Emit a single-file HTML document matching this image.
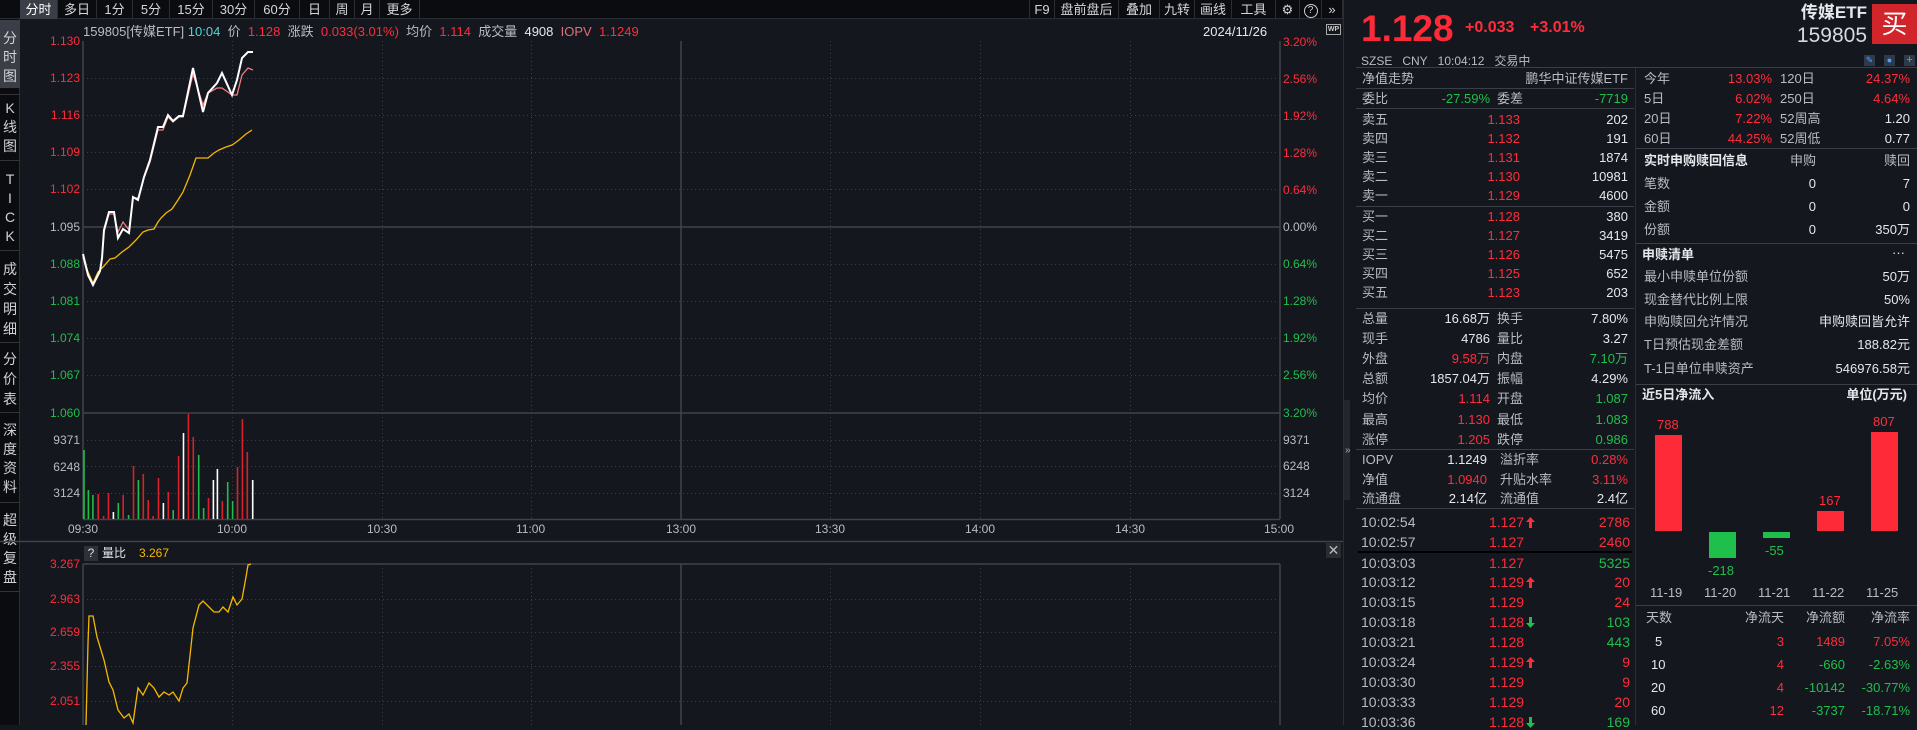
<!DOCTYPE html>
<html><head><meta charset="utf-8">
<style>
*{margin:0;padding:0;box-sizing:border-box}
body{width:1917px;height:725px;background:#14171d;overflow:hidden;position:relative;font-family:"Liberation Sans","Noto Sans CJK SC",sans-serif;color:#c9ccd2}
.t{position:absolute;white-space:nowrap;line-height:1}
.r{color:#ff2d3c}.g{color:#1fbf4c}.w{color:#e6e8ec}.y{color:#f5b800}.c{color:#4fd6d6}.gy{color:#b8bcc4}
.f12{font-size:12px}.f13{font-size:13px}.f14{font-size:14px}
.tab{position:absolute;top:0;height:19px;font-size:13px;line-height:19px;text-align:center;color:#d4d6da;border-right:1px solid #2a2d33}
.sb{position:absolute;left:0;width:20px;font-size:14px;text-align:center;color:#d0d2d6}
.hl{position:absolute;height:1px;background:#2c3038}
.vl{position:absolute;width:1px;background:#2c3038}
b{font-weight:bold}
.au,.ad{display:inline-block;width:9px;height:11px;margin-left:2px;vertical-align:-1px}
</style></head><body>
<svg width="0" height="0" style="position:absolute"><defs>
<symbol id="up" viewBox="0 0 9 11"><path d="M4.5 0 L9 5 L6 5 L6 11 L3 11 L3 5 L0 5 Z" fill="#ff2d3c"/></symbol>
<symbol id="dn" viewBox="0 0 9 11"><path d="M4.5 11 L9 6 L6 6 L6 0 L3 0 L3 6 L0 6 Z" fill="#1fbf4c"/></symbol>
</defs></svg>
<div style="position:absolute;left:0;top:0;width:1343px;height:19px;background:#0b0c0f;border-bottom:1px solid #2a2d33"></div>
<div class="tab" style="left:20px;width:38px;background:#3b3e46;color:#fff">分时</div>
<div class="tab" style="left:58px;width:39px">多日</div>
<div class="tab" style="left:97px;width:36px">1分</div>
<div class="tab" style="left:133px;width:37px">5分</div>
<div class="tab" style="left:170px;width:43px">15分</div>
<div class="tab" style="left:213px;width:42px">30分</div>
<div class="tab" style="left:255px;width:45px">60分</div>
<div class="tab" style="left:300px;width:30px">日</div>
<div class="tab" style="left:330px;width:25px">周</div>
<div class="tab" style="left:355px;width:25px">月</div>
<div class="tab" style="left:380px;width:40px">更多</div>
<div class="tab" style="left:1029px;width:26px;border-left:1px solid #2a2d33">F9</div>
<div class="tab" style="left:1055px;width:64px">盘前盘后</div>
<div class="tab" style="left:1119px;width:41px">叠加</div>
<div class="tab" style="left:1160px;width:35px">九转</div>
<div class="tab" style="left:1195px;width:37px">画线</div>
<div class="tab" style="left:1232px;width:44px">工具</div>
<div class="tab" style="left:1276px;width:24px">⚙</div>
<div class="tab" style="left:1300px;width:22px"><span style="display:inline-block;width:14px;height:14px;border:1px solid #ccc;border-radius:50%;font-size:10px;line-height:12px;vertical-align:middle">?</span></div>
<div class="tab" style="left:1322px;width:21px">»</div>
<div style="position:absolute;left:0;top:19px;width:20px;height:706px;background:#0b0c0f;border-right:1px solid #2a2d33"></div>
<div style="position:absolute;left:0;top:20px;width:20px;height:68px;background:#3b3e46"></div>
<div class="sb" style="top:29px;line-height:19px">分<br>时<br>图</div>
<div class="sb" style="top:99px;line-height:19px">K<br>线<br>图</div>
<div class="sb" style="top:170px;line-height:19px">T<br>I<br>C<br>K</div>
<div class="sb" style="top:259px;line-height:20px">成<br>交<br>明<br>细</div>
<div class="sb" style="top:349px;line-height:20px">分<br>价<br>表</div>
<div class="sb" style="top:421px;line-height:19px">深<br>度<br>资<br>料</div>
<div class="sb" style="top:511px;line-height:19px">超<br>级<br>复<br>盘</div>
<div class="hl" style="left:0;width:20px;top:94px;background:#333"></div>
<div class="hl" style="left:0;width:20px;top:160px;background:#333"></div>
<div class="hl" style="left:0;width:20px;top:250px;background:#333"></div>
<div class="hl" style="left:0;width:20px;top:342px;background:#333"></div>
<div class="hl" style="left:0;width:20px;top:412px;background:#333"></div>
<div class="hl" style="left:0;width:20px;top:502px;background:#333"></div>
<div class="hl" style="left:0;width:20px;top:591px;background:#333"></div>
<div class="t f13" style="left:83px;top:25px"><span class="gy">159805[传媒ETF]</span> <span class="c">10:04</span>&nbsp; <span class="gy">价</span>&nbsp; <span class="r">1.128</span>&nbsp; <span class="gy">涨跌</span>&nbsp; <span class="r">0.033(3.01%)</span>&nbsp; <span class="gy">均价</span>&nbsp; <span class="r">1.114</span>&nbsp; <span class="gy">成交量</span>&nbsp; <span class="w">4908</span>&nbsp; <span style="color:#e0707a">IOPV</span>&nbsp; <span class="r">1.1249</span></div>
<div class="t f13 w" style="left:1203px;top:25px">2024/11/26</div>
<div style="position:absolute;left:1326px;top:24px;width:15px;height:11px;border:1px solid #aaa;font-size:7px;color:#ccc;text-align:center;line-height:9px;font-weight:bold">WP</div>
<svg style="position:absolute;left:0;top:0" width="1343" height="725">
<g stroke="#3a3e46" stroke-dasharray="1,3" stroke-width="1">
<line x1="83" x2="1280" y1="78.5" y2="78.5"/><line x1="83" x2="1280" y1="115.5" y2="115.5"/><line x1="83" x2="1280" y1="152.5" y2="152.5"/><line x1="83" x2="1280" y1="189.5" y2="189.5"/>
<line x1="83" x2="1280" y1="264.5" y2="264.5"/><line x1="83" x2="1280" y1="301.5" y2="301.5"/><line x1="83" x2="1280" y1="338.5" y2="338.5"/><line x1="83" x2="1280" y1="375.5" y2="375.5"/>
<line x1="83" x2="1280" y1="440.5" y2="440.5"/><line x1="83" x2="1280" y1="466.5" y2="466.5"/><line x1="83" x2="1280" y1="493.5" y2="493.5"/>
<line x1="83" x2="1280" y1="599.5" y2="599.5"/><line x1="83" x2="1280" y1="632.5" y2="632.5"/><line x1="83" x2="1280" y1="666.5" y2="666.5"/><line x1="83" x2="1280" y1="701.5" y2="701.5"/>
<line x1="232.5" x2="232.5" y1="41" y2="519"/><line x1="382.5" x2="382.5" y1="41" y2="519"/><line x1="531.5" x2="531.5" y1="41" y2="519"/><line x1="830.5" x2="830.5" y1="41" y2="519"/><line x1="980.5" x2="980.5" y1="41" y2="519"/><line x1="1130.5" x2="1130.5" y1="41" y2="519"/>
<line x1="232.5" x2="232.5" y1="564" y2="725"/><line x1="382.5" x2="382.5" y1="564" y2="725"/><line x1="531.5" x2="531.5" y1="564" y2="725"/><line x1="830.5" x2="830.5" y1="564" y2="725"/><line x1="980.5" x2="980.5" y1="564" y2="725"/><line x1="1130.5" x2="1130.5" y1="564" y2="725"/>
</g>
<g stroke="#3f434b" stroke-width="1.5">
<line x1="681" x2="681" y1="41" y2="519"/><line x1="681" x2="681" y1="564" y2="725"/>
<line x1="83" x2="1280" y1="227" y2="227"/><line x1="83" x2="1280" y1="413" y2="413"/><line x1="83" x2="1280" y1="519.5" y2="519.5"/>
<line x1="83" x2="83" y1="41" y2="519"/><line x1="1280" x2="1280" y1="41" y2="519"/>
<line x1="0" x2="1343" y1="541.5" y2="541.5"/>
<line x1="83" x2="1280" y1="564" y2="564"/><line x1="83" x2="83" y1="564" y2="725"/><line x1="1280" x2="1280" y1="564" y2="725"/>
</g>
<g stroke-width="1.6">
<line x1="84" x2="84" y1="450" y2="519" stroke="#1fbf4c"/><line x1="88.4" x2="88.4" y1="490" y2="519" stroke="#1fbf4c"/><line x1="92.9" x2="92.9" y1="495" y2="519" stroke="#1fbf4c"/><line x1="98.2" x2="98.2" y1="494" y2="519" stroke="#d9202c"/><line x1="103.6" x2="103.6" y1="516" y2="519" stroke="#d9202c"/><line x1="108.5" x2="108.5" y1="493" y2="519" stroke="#d9202c"/><line x1="113.4" x2="113.4" y1="512" y2="519" stroke="#fff"/><line x1="118.3" x2="118.3" y1="503" y2="519" stroke="#1fbf4c"/><line x1="123.2" x2="123.2" y1="495" y2="519" stroke="#d9202c"/><line x1="128.6" x2="128.6" y1="515" y2="519" stroke="#1fbf4c"/><line x1="133.5" x2="133.5" y1="466" y2="519" stroke="#d9202c"/><line x1="138.4" x2="138.4" y1="480" y2="519" stroke="#1fbf4c"/><line x1="143.3" x2="143.3" y1="474" y2="519" stroke="#d9202c"/><line x1="148.2" x2="148.2" y1="500" y2="519" stroke="#d9202c"/><line x1="153.1" x2="153.1" y1="516" y2="519" stroke="#d9202c"/><line x1="158.5" x2="158.5" y1="478" y2="519" stroke="#d9202c"/><line x1="163.4" x2="163.4" y1="503" y2="519" stroke="#fff"/><line x1="168.3" x2="168.3" y1="492" y2="519" stroke="#d9202c"/><line x1="173.2" x2="173.2" y1="510" y2="519" stroke="#1fbf4c"/><line x1="178.6" x2="178.6" y1="456" y2="519" stroke="#d9202c"/><line x1="183.5" x2="183.5" y1="433" y2="519" stroke="#fff"/><line x1="188.4" x2="188.4" y1="414" y2="519" stroke="#d9202c"/><line x1="193.3" x2="193.3" y1="437" y2="519" stroke="#d9202c"/><line x1="198.7" x2="198.7" y1="455" y2="519" stroke="#1fbf4c"/><line x1="203.6" x2="203.6" y1="508" y2="519" stroke="#1fbf4c"/><line x1="208.5" x2="208.5" y1="498" y2="519" stroke="#d9202c"/><line x1="213.4" x2="213.4" y1="480" y2="519" stroke="#fff"/><line x1="217.4" x2="217.4" y1="469" y2="519" stroke="#fff"/><line x1="222.3" x2="222.3" y1="501" y2="519" stroke="#d9202c"/><line x1="227.7" x2="227.7" y1="482" y2="519" stroke="#1fbf4c"/><line x1="232.6" x2="232.6" y1="501" y2="519" stroke="#1fbf4c"/><line x1="237.5" x2="237.5" y1="467" y2="519" stroke="#d9202c"/><line x1="242.4" x2="242.4" y1="419" y2="519" stroke="#d9202c"/><line x1="247.3" x2="247.3" y1="452" y2="519" stroke="#d9202c"/><line x1="252.7" x2="252.7" y1="480" y2="519" stroke="#fff"/>
</g>
<polyline fill="none" stroke="#f5b800" stroke-width="1.3" points="83,257 88,272 93,283 98,272 104,266 110,259 115,258 122,252 129,247 136,240 143,232 148,230 154,229 158,222 161,218 166,213 172,209 178,200 183,192 190,175 196,158 202,158 208,158 214,153 219,150 226,147 232,145 235,143 239,140 246,134 252,130"/>
<polyline fill="none" stroke="#f07c84" stroke-width="1.3" points="83,257 88,276 93,285 100,272 102,260 104,232 109,214 114,214 118,232 123,222 129,230 133,198 138,198 144,178 150,162 158,130 163,130 168,117 173,122 179,117 183,117 193,74 203,105 208,93 217,88 222,88 232,95 237,95 242,75 248,68 253,70"/>
<polyline fill="none" stroke="#ffffff" stroke-width="2" points="83,254 88,275 93,285 100,271 102,258 104,230 109,212 114,212 118,238 123,229 129,233 133,197 138,200 144,177 150,160 158,127 163,127 168,115 173,121 179,116 183,116 193,68 203,112 208,93 217,83 222,73 232,95 237,80 242,58 248,52 253,52"/>
<polyline fill="none" stroke="#f5b800" stroke-width="1.3" points="86,725 88,643 89,616 93,616 97,637 104,660 109,682 113,690 118,710 124,718 129,714 133,723 138,688 143,695 149,683 154,688 159,697 164,692 169,695 173,692 179,701 183,688 187,683 193,628 199,605 203,601 209,607 214,612 219,612 223,607 228,612 233,597 237,605 242,599 246,577 248,565 251,564"/>
</svg>
<div class="t f12 r" style="right:1837px;top:35px">1.130</div>
<div class="t f12 r" style="right:1837px;top:72px">1.123</div>
<div class="t f12 r" style="right:1837px;top:109px">1.116</div>
<div class="t f12 r" style="right:1837px;top:146px">1.109</div>
<div class="t f12 r" style="right:1837px;top:183px">1.102</div>
<div class="t f12 gy" style="right:1837px;top:221px">1.095</div>
<div class="t f12 g" style="right:1837px;top:258px">1.088</div>
<div class="t f12 g" style="right:1837px;top:295px">1.081</div>
<div class="t f12 g" style="right:1837px;top:332px">1.074</div>
<div class="t f12 g" style="right:1837px;top:369px">1.067</div>
<div class="t f12 g" style="right:1837px;top:407px">1.060</div>
<div class="t f12 gy" style="right:1837px;top:434px">9371</div>
<div class="t f12 gy" style="right:1837px;top:461px">6248</div>
<div class="t f12 gy" style="right:1837px;top:487px">3124</div>
<div class="t f12 r" style="right:1837px;top:558px">3.267</div>
<div class="t f12 r" style="right:1837px;top:593px">2.963</div>
<div class="t f12 r" style="right:1837px;top:626px">2.659</div>
<div class="t f12 r" style="right:1837px;top:660px">2.355</div>
<div class="t f12 r" style="right:1837px;top:695px">2.051</div>
<div class="t f12 r" style="left:1283px;top:36px">3.20%</div>
<div class="t f12 r" style="left:1283px;top:73px">2.56%</div>
<div class="t f12 r" style="left:1283px;top:110px">1.92%</div>
<div class="t f12 r" style="left:1283px;top:147px">1.28%</div>
<div class="t f12 r" style="left:1283px;top:184px">0.64%</div>
<div class="t f12 gy" style="left:1283px;top:221px">0.00%</div>
<div class="t f12 g" style="left:1283px;top:258px">0.64%</div>
<div class="t f12 g" style="left:1283px;top:295px">1.28%</div>
<div class="t f12 g" style="left:1283px;top:332px">1.92%</div>
<div class="t f12 g" style="left:1283px;top:369px">2.56%</div>
<div class="t f12 g" style="left:1283px;top:407px">3.20%</div>
<div class="t f12 gy" style="left:1283px;top:434px">9371</div>
<div class="t f12 gy" style="left:1283px;top:460px">6248</div>
<div class="t f12 gy" style="left:1283px;top:487px">3124</div>
<div class="t f12 gy" style="left:68px;top:523px">09:30</div>
<div class="t f12 gy" style="left:217px;top:523px">10:00</div>
<div class="t f12 gy" style="left:367px;top:523px">10:30</div>
<div class="t f12 gy" style="left:516px;top:523px">11:00</div>
<div class="t f12 gy" style="left:666px;top:523px">13:00</div>
<div class="t f12 gy" style="left:815px;top:523px">13:30</div>
<div class="t f12 gy" style="left:965px;top:523px">14:00</div>
<div class="t f12 gy" style="left:1115px;top:523px">14:30</div>
<div class="t f12 gy" style="left:1264px;top:523px">15:00</div>
<div style="position:absolute;left:84px;top:546px;width:14px;height:15px;background:#2e3138;color:#ddd;font-size:12px;text-align:center;line-height:15px">?</div>
<div class="t f12 w" style="left:102px;top:547px">量比</div>
<div class="t f12 y" style="left:139px;top:547px">3.267</div>
<div style="position:absolute;left:1326px;top:543px;width:15px;height:15px;background:#2a2d33;color:#bbb;font-size:14px;text-align:center;line-height:15px">✕</div>
<div class="vl" style="left:1343px;top:0;height:725px;background:#2a2d33"></div>
<div style="position:absolute;left:1344px;top:400px;width:6px;height:100px;background:#23262c"></div>
<div class="t" style="left:1345px;top:446px;font-size:10px;color:#aaa">»</div>
<div class="t r" style="left:1361px;top:10px;font-size:37px;font-weight:bold;color:#ff2a38">1.128</div>
<div class="t r" style="left:1465px;top:20px;font-size:16px;font-weight:bold">+0.033</div>
<div class="t r" style="left:1530px;top:20px;font-size:16px;font-weight:bold">+3.01%</div>
<div class="t w" style="right:50px;top:4px;font-size:17px;font-weight:bold">传媒ETF</div>
<div class="t" style="right:50px;top:25px;font-size:21px;color:#d8dade">159805</div>
<div style="position:absolute;left:1872px;top:4px;width:45px;height:40px;background:#d0252a;color:#fff;font-size:26px;text-align:center;line-height:40px">买</div>
<div class="t f12 gy" style="left:1361px;top:55px">SZSE&nbsp;&nbsp; CNY&nbsp;&nbsp; 10:04:12&nbsp;&nbsp; 交易中</div>
<div style="position:absolute;left:1864px;top:55px;width:11px;height:11px;background:#2d3a4a;color:#4da0ff;font-size:9px;line-height:11px;text-align:center">✎</div>
<div style="position:absolute;left:1884px;top:55px;width:11px;height:11px;background:#2d3a4a;color:#4da0ff;font-size:9px;line-height:11px;text-align:center">●</div>
<div style="position:absolute;left:1904px;top:55px;width:11px;height:11px;background:#2d3a4a;color:#4da0ff;font-size:11px;line-height:11px;text-align:center">+</div>
<div class="hl" style="left:1356px;width:561px;top:67px;background:#3a3e46"></div>
<div class="vl" style="left:1635px;top:68px;height:657px;background:#2a2d33"></div>
<div class="t f13 gy" style="left:1362px;top:72px">净值走势</div>
<div class="t f13 gy" style="right:289px;top:72px">鹏华中证传媒ETF</div>
<div class="hl" style="left:1356px;width:278px;top:88px;background:#3a3e46"></div>
<div class="t f13 gy" style="left:1362px;top:92px">委比</div><div class="t f13 g" style="right:427px;top:92px">-27.59%</div><div class="t f13 gy" style="left:1497px;top:92px">委差</div><div class="t f13 g" style="right:289px;top:92px">-7719</div>
<div class="hl" style="left:1356px;width:278px;top:108px;background:#3a3e46"></div>
<div class="t f13 gy" style="left:1362px;top:113px">卖五</div><div class="t f13 r" style="right:397px;top:113px">1.133</div><div class="t f13 w" style="right:289px;top:113px">202</div>
<div class="t f13 gy" style="left:1362px;top:132px">卖四</div><div class="t f13 r" style="right:397px;top:132px">1.132</div><div class="t f13 w" style="right:289px;top:132px">191</div>
<div class="t f13 gy" style="left:1362px;top:151px">卖三</div><div class="t f13 r" style="right:397px;top:151px">1.131</div><div class="t f13 w" style="right:289px;top:151px">1874</div>
<div class="t f13 gy" style="left:1362px;top:170px">卖二</div><div class="t f13 r" style="right:397px;top:170px">1.130</div><div class="t f13 w" style="right:289px;top:170px">10981</div>
<div class="t f13 gy" style="left:1362px;top:189px">卖一</div><div class="t f13 r" style="right:397px;top:189px">1.129</div><div class="t f13 w" style="right:289px;top:189px">4600</div>
<div class="hl" style="left:1356px;width:278px;top:206px;background:#3a3e46"></div>
<div class="t f13 gy" style="left:1362px;top:210px">买一</div><div class="t f13 r" style="right:397px;top:210px">1.128</div><div class="t f13 w" style="right:289px;top:210px">380</div>
<div class="t f13 gy" style="left:1362px;top:229px">买二</div><div class="t f13 r" style="right:397px;top:229px">1.127</div><div class="t f13 w" style="right:289px;top:229px">3419</div>
<div class="t f13 gy" style="left:1362px;top:248px">买三</div><div class="t f13 r" style="right:397px;top:248px">1.126</div><div class="t f13 w" style="right:289px;top:248px">5475</div>
<div class="t f13 gy" style="left:1362px;top:267px">买四</div><div class="t f13 r" style="right:397px;top:267px">1.125</div><div class="t f13 w" style="right:289px;top:267px">652</div>
<div class="t f13 gy" style="left:1362px;top:286px">买五</div><div class="t f13 r" style="right:397px;top:286px">1.123</div><div class="t f13 w" style="right:289px;top:286px">203</div>
<div class="hl" style="left:1356px;width:278px;top:308px;background:#3a3e46"></div>
<div class="t f13 gy" style="left:1362px;top:312px">总量</div><div class="t f13 w" style="right:427px;top:312px">16.68万</div><div class="t f13 gy" style="left:1497px;top:312px">换手</div><div class="t f13 w" style="right:289px;top:312px">7.80%</div>
<div class="t f13 gy" style="left:1362px;top:332px">现手</div><div class="t f13 w" style="right:427px;top:332px">4786</div><div class="t f13 gy" style="left:1497px;top:332px">量比</div><div class="t f13 w" style="right:289px;top:332px">3.27</div>
<div class="t f13 gy" style="left:1362px;top:352px">外盘</div><div class="t f13 r" style="right:427px;top:352px">9.58万</div><div class="t f13 gy" style="left:1497px;top:352px">内盘</div><div class="t f13 g" style="right:289px;top:352px">7.10万</div>
<div class="t f13 gy" style="left:1362px;top:372px">总额</div><div class="t f13 w" style="right:427px;top:372px">1857.04万</div><div class="t f13 gy" style="left:1497px;top:372px">振幅</div><div class="t f13 w" style="right:289px;top:372px">4.29%</div>
<div class="t f13 gy" style="left:1362px;top:392px">均价</div><div class="t f13 r" style="right:427px;top:392px">1.114</div><div class="t f13 gy" style="left:1497px;top:392px">开盘</div><div class="t f13 g" style="right:289px;top:392px">1.087</div>
<div class="t f13 gy" style="left:1362px;top:413px">最高</div><div class="t f13 r" style="right:427px;top:413px">1.130</div><div class="t f13 gy" style="left:1497px;top:413px">最低</div><div class="t f13 g" style="right:289px;top:413px">1.083</div>
<div class="t f13 gy" style="left:1362px;top:433px">涨停</div><div class="t f13 r" style="right:427px;top:433px">1.205</div><div class="t f13 gy" style="left:1497px;top:433px">跌停</div><div class="t f13 g" style="right:289px;top:433px">0.986</div>
<div class="hl" style="left:1356px;width:278px;top:449px;background:#3a3e46"></div>
<div class="t f13 gy" style="left:1362px;top:453px">IOPV</div><div class="t f13 w" style="right:430px;top:453px">1.1249</div><div class="t f13 gy" style="left:1500px;top:453px">溢折率</div><div class="t f13 r" style="right:289px;top:453px">0.28%</div>
<div class="t f13 gy" style="left:1362px;top:473px">净值</div><div class="t f13 r" style="right:430px;top:473px">1.0940</div><div class="t f13 gy" style="left:1500px;top:473px">升贴水率</div><div class="t f13 r" style="right:289px;top:473px">3.11%</div>
<div class="t f13 gy" style="left:1362px;top:492px">流通盘</div><div class="t f13 w" style="right:430px;top:492px">2.14亿</div><div class="t f13 gy" style="left:1500px;top:492px">流通值</div><div class="t f13 w" style="right:289px;top:492px">2.4亿</div>
<div class="hl" style="left:1356px;width:278px;top:508px;background:#3a3e46"></div>
<div class="t f14 gy" style="left:1361px;top:515px">10:02:54</div><div class="t f14 r" style="left:1489px;top:515px">1.127<svg class="au"><use href="#up"/></svg></div><div class="t f14 r" style="right:287px;top:515px">2786</div>
<div class="t f14 gy" style="left:1361px;top:535px">10:02:57</div><div class="t f14 r" style="left:1489px;top:535px">1.127</div><div class="t f14 r" style="right:287px;top:535px">2460</div>
<div class="hl" style="left:1358px;width:274px;top:551px;background:#000;height:2px"></div>
<div class="t f14 gy" style="left:1361px;top:556px">10:03:03</div><div class="t f14 r" style="left:1489px;top:556px">1.127</div><div class="t f14 g" style="right:287px;top:556px">5325</div>
<div class="t f14 gy" style="left:1361px;top:575px">10:03:12</div><div class="t f14 r" style="left:1489px;top:575px">1.129<svg class="au"><use href="#up"/></svg></div><div class="t f14 r" style="right:287px;top:575px">20</div>
<div class="t f14 gy" style="left:1361px;top:595px">10:03:15</div><div class="t f14 r" style="left:1489px;top:595px">1.129</div><div class="t f14 r" style="right:287px;top:595px">24</div>
<div class="t f14 gy" style="left:1361px;top:615px">10:03:18</div><div class="t f14 r" style="left:1489px;top:615px">1.128<svg class="ad"><use href="#dn"/></svg></div><div class="t f14 g" style="right:287px;top:615px">103</div>
<div class="t f14 gy" style="left:1361px;top:635px">10:03:21</div><div class="t f14 r" style="left:1489px;top:635px">1.128</div><div class="t f14 g" style="right:287px;top:635px">443</div>
<div class="t f14 gy" style="left:1361px;top:655px">10:03:24</div><div class="t f14 r" style="left:1489px;top:655px">1.129<svg class="au"><use href="#up"/></svg></div><div class="t f14 r" style="right:287px;top:655px">9</div>
<div class="t f14 gy" style="left:1361px;top:675px">10:03:30</div><div class="t f14 r" style="left:1489px;top:675px">1.129</div><div class="t f14 r" style="right:287px;top:675px">9</div>
<div class="t f14 gy" style="left:1361px;top:695px">10:03:33</div><div class="t f14 r" style="left:1489px;top:695px">1.129</div><div class="t f14 r" style="right:287px;top:695px">20</div>
<div class="t f14 gy" style="left:1361px;top:715px">10:03:36</div><div class="t f14 r" style="left:1489px;top:715px">1.128<svg class="ad"><use href="#dn"/></svg></div><div class="t f14 g" style="right:287px;top:715px">169</div>
<div class="t f13 gy" style="left:1644px;top:72px">今年</div><div class="t f13 r" style="right:145px;top:72px">13.03%</div><div class="t f13 gy" style="left:1780px;top:72px">120日</div><div class="t f13 r" style="right:7px;top:72px">24.37%</div>
<div class="t f13 gy" style="left:1644px;top:92px">5日</div><div class="t f13 r" style="right:145px;top:92px">6.02%</div><div class="t f13 gy" style="left:1780px;top:92px">250日</div><div class="t f13 r" style="right:7px;top:92px">4.64%</div>
<div class="t f13 gy" style="left:1644px;top:112px">20日</div><div class="t f13 r" style="right:145px;top:112px">7.22%</div><div class="t f13 gy" style="left:1780px;top:112px">52周高</div><div class="t f13 w" style="right:7px;top:112px">1.20</div>
<div class="t f13 gy" style="left:1644px;top:132px">60日</div><div class="t f13 r" style="right:145px;top:132px">44.25%</div><div class="t f13 gy" style="left:1780px;top:132px">52周低</div><div class="t f13 w" style="right:7px;top:132px">0.77</div>
<div class="hl" style="left:1636px;width:281px;top:148px;background:#3a3e46"></div>
<div class="t f13 w" style="left:1644px;top:154px"><b>实时申购赎回信息</b></div><div class="t f13 gy" style="right:101px;top:154px">申购</div><div class="t f13 gy" style="right:7px;top:154px">赎回</div>
<div class="t f13 gy" style="left:1644px;top:177px">笔数</div><div class="t f13 w" style="right:101px;top:177px">0</div><div class="t f13 w" style="right:7px;top:177px">7</div>
<div class="t f13 gy" style="left:1644px;top:200px">金额</div><div class="t f13 w" style="right:101px;top:200px">0</div><div class="t f13 w" style="right:7px;top:200px">0</div>
<div class="t f13 gy" style="left:1644px;top:223px">份额</div><div class="t f13 w" style="right:101px;top:223px">0</div><div class="t f13 w" style="right:7px;top:223px">350万</div>
<div class="hl" style="left:1636px;width:281px;top:243px;background:#3a3e46"></div>
<div class="t f13 w" style="left:1642px;top:248px"><b>申赎清单</b></div><div class="t f13 w" style="right:12px;top:246px">···</div>
<div class="t f13 gy" style="left:1644px;top:270px">最小申赎单位份额</div><div class="t f13 w" style="right:7px;top:270px">50万</div>
<div class="t f13 gy" style="left:1644px;top:293px">现金替代比例上限</div><div class="t f13 w" style="right:7px;top:293px">50%</div>
<div class="t f13 gy" style="left:1644px;top:315px">申购赎回允许情况</div><div class="t f13 w" style="right:7px;top:315px">申购赎回皆允许</div>
<div class="t f13 gy" style="left:1644px;top:338px">T日预估现金差额</div><div class="t f13 w" style="right:7px;top:338px">188.82元</div>
<div class="t f13 gy" style="left:1644px;top:362px">T-1日单位申赎资产</div><div class="t f13 w" style="right:7px;top:362px">546976.58元</div>
<div class="hl" style="left:1636px;width:281px;top:384px;background:#3a3e46"></div>
<div class="t f13 w" style="left:1642px;top:388px"><b>近5日净流入</b></div><div class="t f13 w" style="right:10px;top:388px"><b>单位(万元)</b></div>
<div style="position:absolute;left:1655px;top:435px;width:27px;height:96px;background:#ff2a38"></div>
<div style="position:absolute;left:1709px;top:532px;width:27px;height:26px;background:#1fbf4c"></div>
<div style="position:absolute;left:1763px;top:532px;width:27px;height:6px;background:#1fbf4c"></div>
<div style="position:absolute;left:1817px;top:511px;width:27px;height:20px;background:#ff2a38"></div>
<div style="position:absolute;left:1871px;top:432px;width:27px;height:99px;background:#ff2a38"></div>
<div class="t f13 r" style="left:1657px;top:418px">788</div>
<div class="t f13 g" style="left:1708px;top:564px">-218</div>
<div class="t f13 g" style="left:1765px;top:544px">-55</div>
<div class="t f13 r" style="left:1819px;top:494px">167</div>
<div class="t f13 r" style="left:1873px;top:415px">807</div>
<div class="t f13 gy" style="left:1650px;top:586px">11-19</div>
<div class="t f13 gy" style="left:1704px;top:586px">11-20</div>
<div class="t f13 gy" style="left:1758px;top:586px">11-21</div>
<div class="t f13 gy" style="left:1812px;top:586px">11-22</div>
<div class="t f13 gy" style="left:1866px;top:586px">11-25</div>
<div class="hl" style="left:1636px;width:281px;top:605px;background:#3a3e46"></div>
<div class="t f13 gy" style="left:1646px;top:611px">天数</div><div class="t f13 gy" style="right:133px;top:611px">净流天</div><div class="t f13 gy" style="right:72px;top:611px">净流额</div><div class="t f13 gy" style="right:7px;top:611px">净流率</div>
<div class="t f13 w" style="left:1655px;top:635px">5</div><div class="t f13 r" style="right:133px;top:635px">3</div><div class="t f13 r" style="right:72px;top:635px">1489</div><div class="t f13 r" style="right:7px;top:635px">7.05%</div>
<div class="t f13 w" style="left:1651px;top:658px">10</div><div class="t f13 r" style="right:133px;top:658px">4</div><div class="t f13 g" style="right:72px;top:658px">-660</div><div class="t f13 g" style="right:7px;top:658px">-2.63%</div>
<div class="t f13 w" style="left:1651px;top:681px">20</div><div class="t f13 r" style="right:133px;top:681px">4</div><div class="t f13 g" style="right:72px;top:681px">-10142</div><div class="t f13 g" style="right:7px;top:681px">-30.77%</div>
<div class="t f13 w" style="left:1651px;top:704px">60</div><div class="t f13 r" style="right:133px;top:704px">12</div><div class="t f13 g" style="right:72px;top:704px">-3737</div><div class="t f13 g" style="right:7px;top:704px">-18.71%</div>
</body></html>
